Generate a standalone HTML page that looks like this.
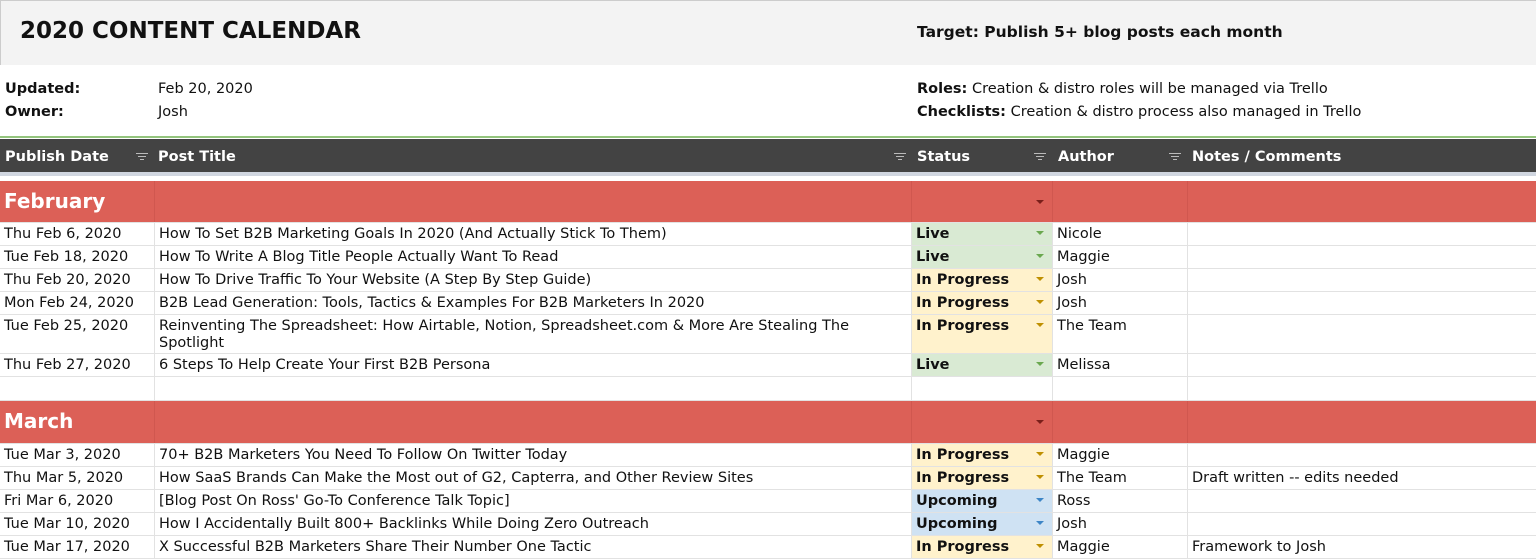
<!DOCTYPE html>
<html><head><meta charset="utf-8"><style>
*{margin:0;padding:0;box-sizing:border-box}
body{width:1536px;height:559px;overflow:hidden;background:#fff;font-family:"DejaVu Sans","Liberation Sans",sans-serif;font-size:14.5px;color:#111;position:relative}
.a{position:absolute}
.r{position:absolute;left:0;width:1536px;border-bottom:1px solid #e2e2e2}
.c{position:absolute;top:0;bottom:0;padding:3px 5px 0 4px;border-right:1px solid #e2e2e2;white-space:nowrap;overflow:hidden;line-height:17px}
.c1{left:0;width:155px}.c2{left:155px;width:757px}.c3{left:912px;width:141px;font-weight:bold}.c4{left:1053px;width:135px}.c5{left:1188px;width:348px;border-right:none}
.m{background:#dc6057;color:#fff}
.m .c{border-right-color:#d0574f}
.m .c1{font-size:20px;font-weight:bold;padding-top:12px}
.g{background:#d9ead3}.y{background:#fff2cc}.b{background:#cfe2f3}
.ar{position:absolute;right:8px;top:8px;width:0;height:0;border-left:4px solid transparent;border-right:4px solid transparent;border-top:4px solid #6aa84f}
.y .ar{border-top-color:#bf9000}.b .ar{border-top-color:#3d85c6}
.hd{position:absolute;top:139px;left:0;width:1536px;height:37px;background:#434343;color:#fff;font-weight:bold;border-bottom:4px solid #d0d6e0}
.hd span{position:absolute;top:10px}
.f{position:absolute;top:14px;width:12px}
.f i{display:block;height:1px;background:#bbb;margin:0 auto 2px}
</style></head><body>
<div class="a" style="left:0;top:0;width:1536px;height:65px;background:#f3f3f3;border-top:1px solid #ccc;border-left:1px solid #ccc"></div>
<div class="a" style="left:20px;top:18px;font-size:23px;font-weight:bold;color:#111">2020 CONTENT CALENDAR</div>
<div class="a" style="left:917px;top:23px;font-size:15.5px;font-weight:bold">Target: Publish 5+ blog posts each month</div>
<div class="a" style="left:5px;top:81px;font-weight:bold">Updated:</div>
<div class="a" style="left:158px;top:81px">Feb 20, 2020</div>
<div class="a" style="left:5px;top:104px;font-weight:bold">Owner:</div>
<div class="a" style="left:158px;top:104px">Josh</div>
<div class="a" style="left:917px;top:81px"><b>Roles:</b> Creation &amp; distro roles will be managed via Trello</div>
<div class="a" style="left:917px;top:104px"><b>Checklists:</b> Creation &amp; distro process also managed in Trello</div>
<div class="a" style="left:0;top:136px;width:1536px;height:2px;background:#93c47d"></div>
<div class="hd">
<span style="left:5px">Publish Date</span><div class="f" style="left:136px"><i style="width:12px"></i><i style="width:8px"></i><i style="width:4px"></i></div>
<span style="left:158px">Post Title</span><div class="f" style="left:894px"><i style="width:12px"></i><i style="width:8px"></i><i style="width:4px"></i></div>
<span style="left:917px">Status</span><div class="f" style="left:1034px"><i style="width:12px"></i><i style="width:8px"></i><i style="width:4px"></i></div>
<span style="left:1058px">Author</span><div class="f" style="left:1169px"><i style="width:12px"></i><i style="width:8px"></i><i style="width:4px"></i></div>
<span style="left:1192px">Notes / Comments</span>
</div>

<div class="r m" style="top:181px;height:42px"><div class="c c1">February</div><div class="c c2"></div><div class="c c3"><div class="ar" style="top:19px;border-top-color:#7a1f1a"></div></div><div class="c c4"></div><div class="c c5"></div></div>
<div class="r" style="top:223px;height:23px"><div class="c c1">Thu Feb 6, 2020</div><div class="c c2">How To Set B2B Marketing Goals In 2020 (And Actually Stick To Them)</div><div class="c c3 g">Live<div class="ar"></div></div><div class="c c4">Nicole</div><div class="c c5"></div></div>
<div class="r" style="top:246px;height:23px"><div class="c c1">Tue Feb 18, 2020</div><div class="c c2">How To Write A Blog Title People Actually Want To Read</div><div class="c c3 g">Live<div class="ar"></div></div><div class="c c4">Maggie</div><div class="c c5"></div></div>
<div class="r" style="top:269px;height:23px"><div class="c c1">Thu Feb 20, 2020</div><div class="c c2">How To Drive Traffic To Your Website (A Step By Step Guide)</div><div class="c c3 y">In Progress<div class="ar"></div></div><div class="c c4">Josh</div><div class="c c5"></div></div>
<div class="r" style="top:292px;height:23px"><div class="c c1">Mon Feb 24, 2020</div><div class="c c2">B2B Lead Generation: Tools, Tactics &amp; Examples For B2B Marketers In 2020</div><div class="c c3 y">In Progress<div class="ar"></div></div><div class="c c4">Josh</div><div class="c c5"></div></div>
<div class="r" style="top:315px;height:39px"><div class="c c1">Tue Feb 25, 2020</div><div class="c c2">Reinventing The Spreadsheet: How Airtable, Notion, Spreadsheet.com &amp; More Are Stealing The<br>Spotlight</div><div class="c c3 y">In Progress<div class="ar"></div></div><div class="c c4">The Team</div><div class="c c5"></div></div>
<div class="r" style="top:354px;height:23px"><div class="c c1">Thu Feb 27, 2020</div><div class="c c2">6 Steps To Help Create Your First B2B Persona</div><div class="c c3 g">Live<div class="ar"></div></div><div class="c c4">Melissa</div><div class="c c5"></div></div>
<div class="r" style="top:377px;height:24px"><div class="c c1"></div><div class="c c2"></div><div class="c c3" style="font-weight:normal"></div><div class="c c4"></div><div class="c c5"></div></div>
<div class="r m" style="top:401px;height:43px"><div class="c c1">March</div><div class="c c2"></div><div class="c c3"><div class="ar" style="top:19px;border-top-color:#7a1f1a"></div></div><div class="c c4"></div><div class="c c5"></div></div>
<div class="r" style="top:444px;height:23px"><div class="c c1">Tue Mar 3, 2020</div><div class="c c2">70+ B2B Marketers You Need To Follow On Twitter Today</div><div class="c c3 y">In Progress<div class="ar"></div></div><div class="c c4">Maggie</div><div class="c c5"></div></div>
<div class="r" style="top:467px;height:23px"><div class="c c1">Thu Mar 5, 2020</div><div class="c c2">How SaaS Brands Can Make the Most out of G2, Capterra, and Other Review Sites</div><div class="c c3 y">In Progress<div class="ar"></div></div><div class="c c4">The Team</div><div class="c c5">Draft written -- edits needed</div></div>
<div class="r" style="top:490px;height:23px"><div class="c c1">Fri Mar 6, 2020</div><div class="c c2">[Blog Post On Ross' Go-To Conference Talk Topic]</div><div class="c c3 b">Upcoming<div class="ar"></div></div><div class="c c4">Ross</div><div class="c c5"></div></div>
<div class="r" style="top:513px;height:23px"><div class="c c1">Tue Mar 10, 2020</div><div class="c c2">How I Accidentally Built 800+ Backlinks While Doing Zero Outreach</div><div class="c c3 b">Upcoming<div class="ar"></div></div><div class="c c4">Josh</div><div class="c c5"></div></div>
<div class="r" style="top:536px;height:23px"><div class="c c1">Tue Mar 17, 2020</div><div class="c c2">X Successful B2B Marketers Share Their Number One Tactic</div><div class="c c3 y">In Progress<div class="ar"></div></div><div class="c c4">Maggie</div><div class="c c5">Framework to Josh</div></div>
</body></html>
